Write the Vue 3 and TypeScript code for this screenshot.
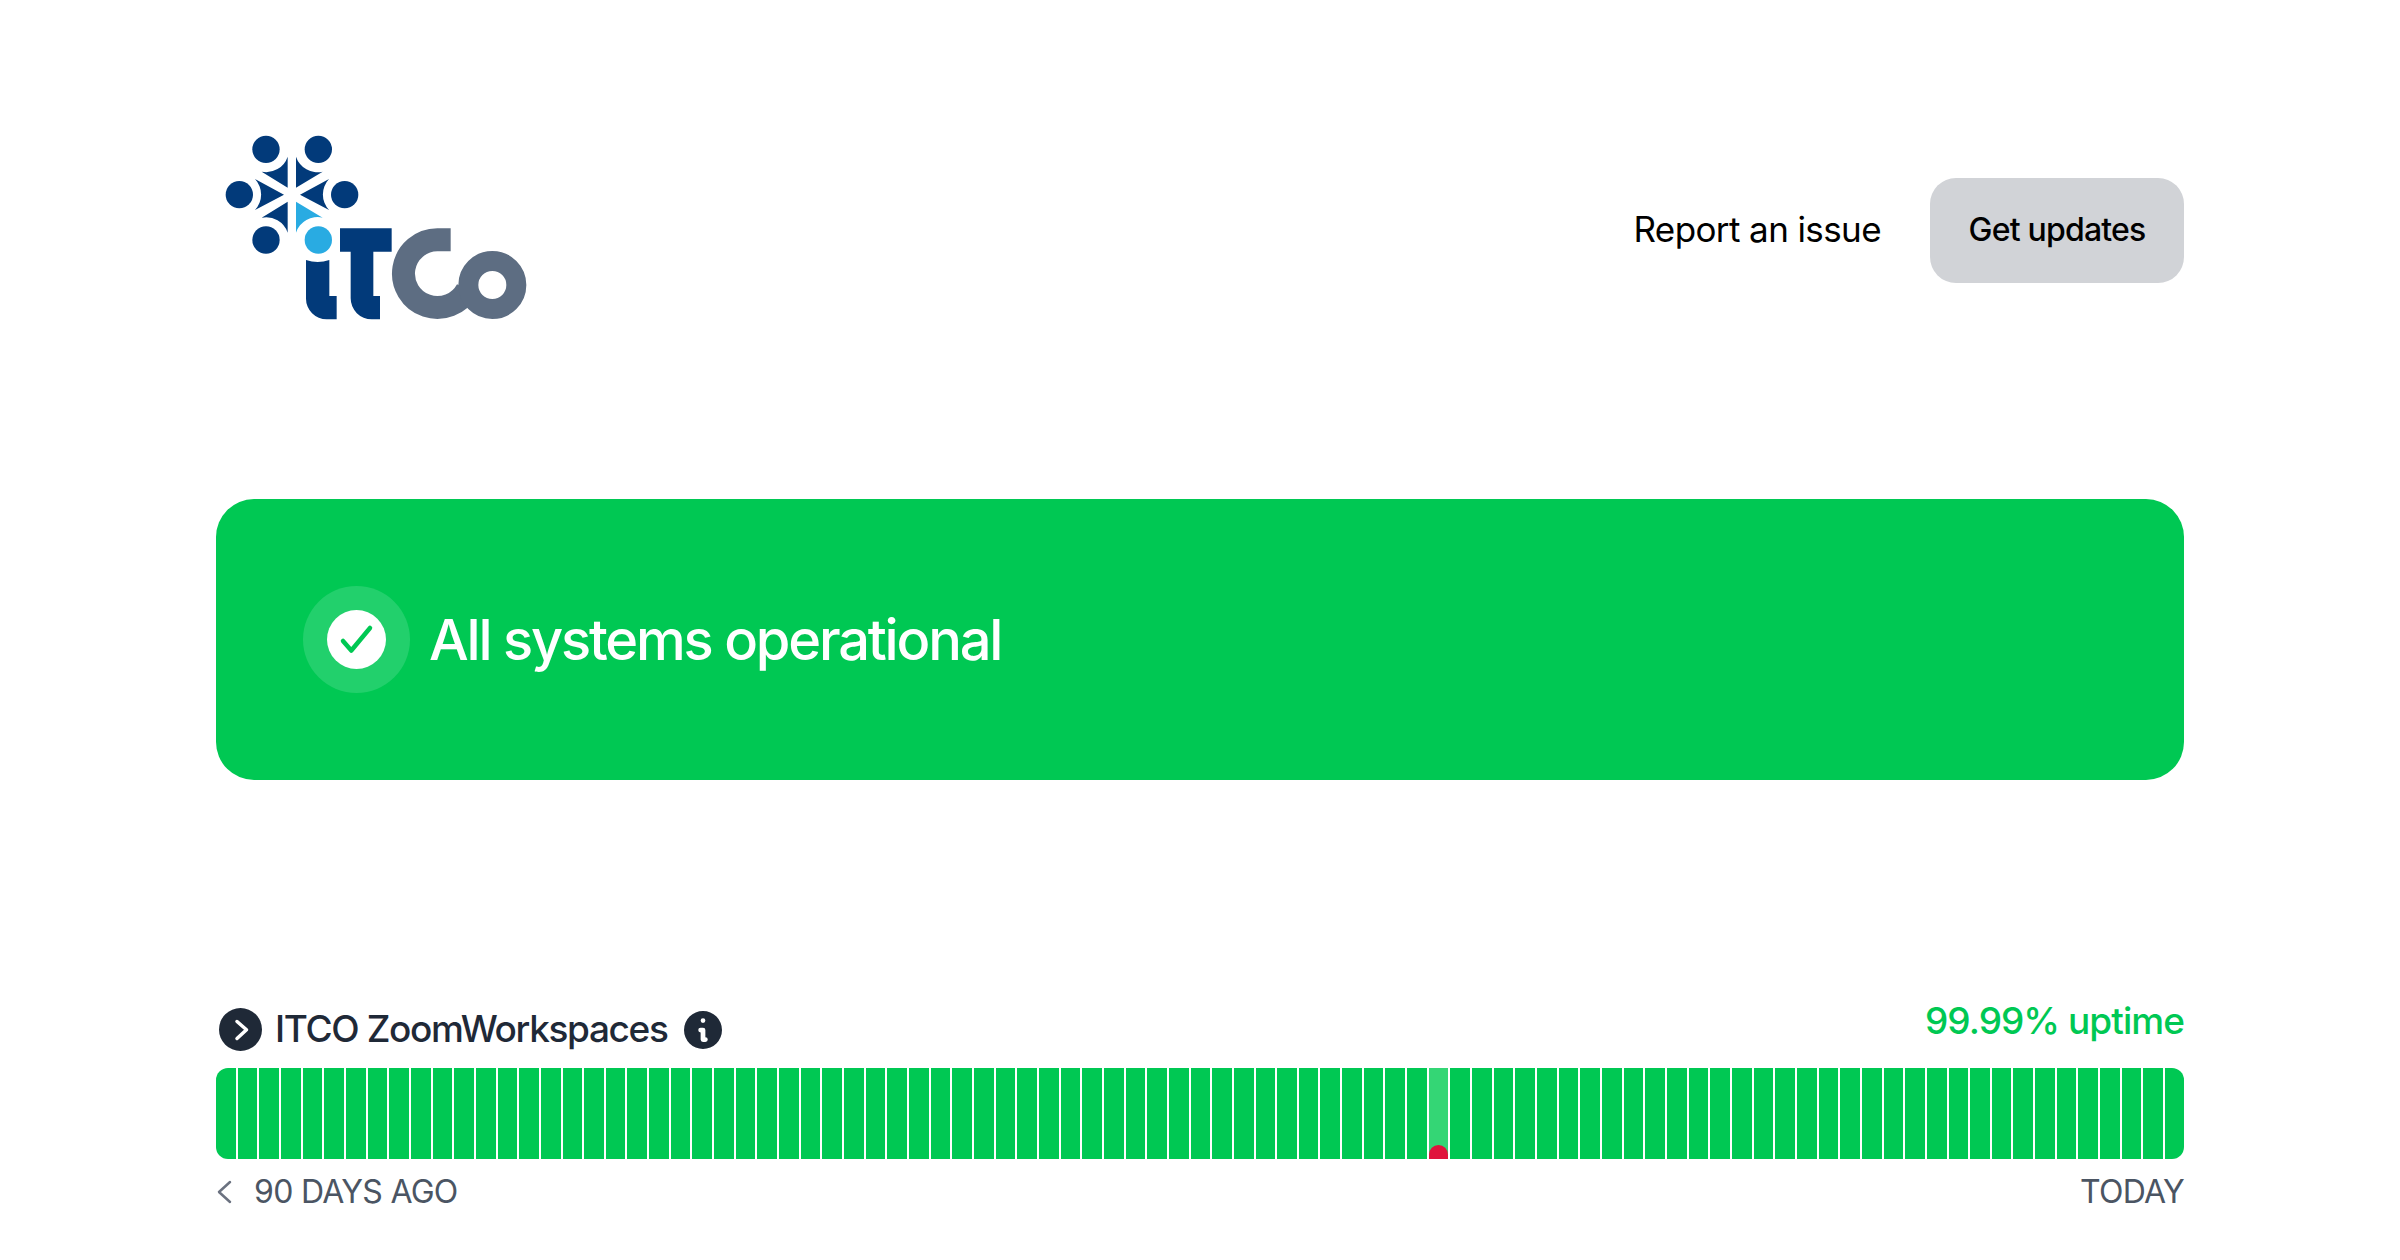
<template>
  <div class="page">
    <header class="header">
      <svg class="logo" viewBox="48 75 936 573" role="img" aria-label="ITCO">
        <g fill="#023a7a">
          <circle cx="198" cy="118" r="41" />
          <circle cx="355" cy="118" r="41" />
          <circle cx="118" cy="254" r="41" />
          <circle cx="434" cy="254" r="41" />
          <circle cx="198" cy="390" r="41" />
          <path d="M263 233V140A68 68 0 0 1 185 185Z" />
          <path d="M288 233V140A68 68 0 0 0 368 185Z" />
          <path d="M252 254L165 207A68 68 0 0 1 165 300Z" />
          <path d="M300 254L387 207A68 68 0 0 0 387 300Z" />
          <path d="M263 275V368A68 68 0 0 0 185 323Z" />
          <path d="M318 450Q353 462 388 450V558H410V628H380A62 62 0 0 1 318 566Z" />
          <path d="M420 355H575V425H520V558H540V628H515A63 63 0 0 1 452 565V425H420Z" />
        </g>
        <g fill="#29abe2">
          <circle cx="355" cy="390" r="41" />
          <path d="M288 275V368A68 68 0 0 1 368 323Z" />
        </g>
        <g fill="none" stroke="#5d6d82">
          <path d="M752 389.500H712A101.500 101.500 0 1 0 801.600 538.600" stroke-width="69" />
          <circle cx="877" cy="525" r="72" stroke-width="60" />
        </g>
      </svg>
      <nav class="actions">
        <a class="report">Report an issue</a>
        <button class="updates" type="button">Get updates</button>
      </nav>
    </header>

    <section class="banner">
      <span class="banner-icon">
        <svg viewBox="0 0 59 59" width="59" height="59">
          <circle cx="29.500" cy="29.500" r="29.500" fill="#fff" />
          <path d="M16 31L24.300 40.500L43 18" fill="none" stroke="#00c853" stroke-width="4.500" stroke-linecap="round" stroke-linejoin="round" />
        </svg>
      </span>
      <h1 class="banner-title">All systems operational</h1>
    </section>

    <section class="service">
      <div class="service-head">
        <div class="service-name">
          <svg class="chevron" viewBox="0 0 43 43" width="43" height="43">
            <circle cx="21.500" cy="21.500" r="21.500" fill="#1f2937" />
            <path d="M18 13.500L27.500 21.800L18 30.500" fill="none" stroke="#fff" stroke-width="3.500" stroke-linecap="round" stroke-linejoin="round" />
          </svg>
          <span class="name">ITCO ZoomWorkspaces</span>
          <svg class="info" viewBox="2 2 16 16" width="38" height="38">
            <path
              fill="#1f2937"
              fill-rule="evenodd"
              d="M18 10a8 8 0 11-16 0 8 8 0 0116 0zm-7-4a1 1 0 11-2 0 1 1 0 012 0zM9 9a1 1 0 000 2v3a1 1 0 001 1h1a1 1 0 100-2v-3a1 1 0 00-1-1H9z"
            />
          </svg>
        </div>
        <span class="uptime">99.99% uptime</span>
      </div>

      <div class="bars">
        <div v-for="day in days" :key="day.index" class="bar" :class="{ faded: day.outage }">
          <span v-if="day.outage" class="outage"></span>
        </div>
      </div>

      <div class="range">
        <span class="range-start">
          <svg viewBox="0 0 16 24" width="16" height="24">
            <path d="M14 2L3 12L14 22" fill="none" stroke="#6b7280" stroke-width="2.500" stroke-linecap="round" stroke-linejoin="round" />
          </svg>
          90 DAYS AGO
        </span>
        <span>TODAY</span>
      </div>
    </section>
  </div>
</template>

<script setup lang="ts">
interface Day {
  index: number;
  outage: boolean;
}

const days: Day[] = Array.from({ length: 91 }, (_, index) => ({
  index,
  outage: index === 56,
}));
</script>

<style>
html,
body {
  background: #fff;
}
</style>

<style scoped>
.page {
  width: 1968px;
  margin: 0 auto;
  padding-top: 135px;
  font-family: Inter, "Liberation Sans", sans-serif;
}

.header {
  display: flex;
  justify-content: space-between;
  align-items: center;
}

.logo {
  width: 312px;
  height: 191px;
  display: block;
}

.actions {
  display: flex;
  align-items: center;
  gap: 49px;
}

.report {
  margin-top: -3px;
  font-size: 35px;
  letter-spacing: -0.6px;
  color: #000;
}

.updates {
  width: 254px;
  height: 105px;
  padding: 0 0 3px;
  border: none;
  border-radius: 26px;
  background: #d1d3d7;
  color: #000;
  font-family: inherit;
  font-size: 32px;
  font-weight: 500;
  letter-spacing: -0.8px;
}

.banner {
  height: 281px;
  margin-top: 173px;
  padding-left: 87px;
  display: flex;
  align-items: center;
  gap: 20px;
  border-radius: 38px;
  background: #00c853;
  color: #fff;
}

.banner-icon {
  width: 107px;
  height: 107px;
  display: flex;
  align-items: center;
  justify-content: center;
  border-radius: 50%;
  background: #22d06c;
}

.banner-title {
  margin: 0 0 0 -1px;
  font-size: 56px;
  font-weight: 500;
  letter-spacing: -2.2px;
}

.service {
  margin-top: 221px;
}

.service-head {
  display: flex;
  justify-content: space-between;
  align-items: flex-start;
  height: 67px;
}

.service-name {
  display: flex;
  align-items: center;
  margin-top: 5px;
}

.chevron {
  margin-left: 3px;
  margin-top: 2px;
}

.name {
  margin-left: 13px;
  font-size: 37px;
  font-weight: 500;
  letter-spacing: -1.35px;
  color: #1f2937;
}

.info {
  margin-left: 16px;
  margin-top: 2px;
}

.uptime {
  margin-top: -3px;
  font-size: 37px;
  font-weight: 500;
  letter-spacing: -0.95px;
  color: #00c853;
}

.bars {
  height: 91px;
  display: flex;
  gap: 2px;
  overflow: hidden;
  border-radius: 12px;
}

.bar {
  position: relative;
  flex: 0 0 19.67px;
  background: #00c853;
}

.bar.faded {
  background: #34d675;
}

.outage {
  position: absolute;
  left: 0;
  right: 0;
  bottom: 0;
  height: 14px;
  border-radius: 10px 10px 0 0;
  background: #e0143c;
}

.range {
  margin-top: 13px;
  display: flex;
  justify-content: space-between;
  font-size: 32px;
  letter-spacing: -0.7px;
  color: #4b5563;
}

.range-start {
  display: flex;
  align-items: center;
  gap: 22px;
}
</style>
